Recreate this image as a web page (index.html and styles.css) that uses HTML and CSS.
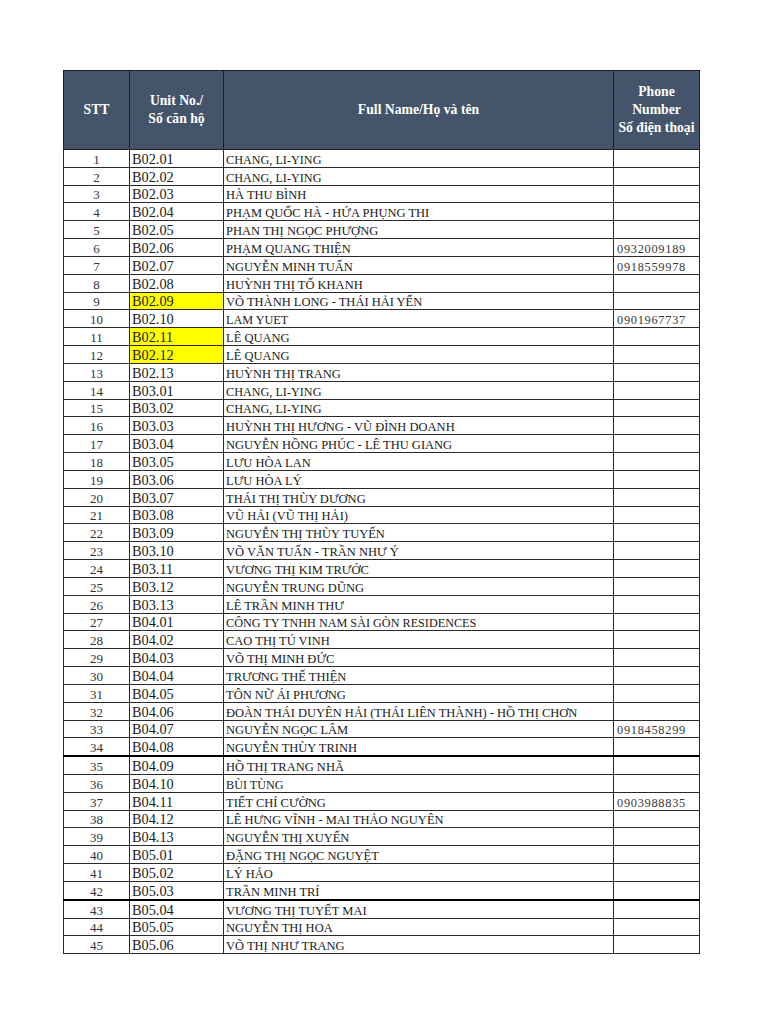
FILE: index.html
```html
<!DOCTYPE html>
<html lang="vi">
<head>
<meta charset="utf-8">
<title>Danh sách căn hộ</title>
<link rel="stylesheet" href="styles.css">
</head>
<body>
<table class="sheet">
  <colgroup>
    <col class="c-stt"><col class="c-unit"><col class="c-name"><col class="c-phone">
  </colgroup>
  <thead>
    <tr>
      <th>STT</th>
      <th>Unit No./<br>Số căn hộ</th>
      <th>Full Name/Họ và tên</th>
      <th>Phone<br>Number<br>Số điện thoại</th>
    </tr>
  </thead>
  <tbody>
    <tr><td class="stt">1</td><td class="unit">B02.01</td><td class="name sm">CHANG, LI-YING</td><td class="phone"></td></tr>
    <tr><td class="stt">2</td><td class="unit">B02.02</td><td class="name sm">CHANG, LI-YING</td><td class="phone"></td></tr>
    <tr><td class="stt">3</td><td class="unit">B02.03</td><td class="name">HÀ THU BÌNH</td><td class="phone"></td></tr>
    <tr><td class="stt">4</td><td class="unit">B02.04</td><td class="name">PHẠM QUỐC HÀ - HỨA PHỤNG THI</td><td class="phone"></td></tr>
    <tr><td class="stt">5</td><td class="unit">B02.05</td><td class="name">PHAN THỊ NGỌC PHƯỢNG</td><td class="phone"></td></tr>
    <tr><td class="stt">6</td><td class="unit">B02.06</td><td class="name">PHẠM QUANG THIỆN</td><td class="phone">0932009189</td></tr>
    <tr><td class="stt">7</td><td class="unit">B02.07</td><td class="name">NGUYỄN MINH TUẤN</td><td class="phone">0918559978</td></tr>
    <tr><td class="stt">8</td><td class="unit">B02.08</td><td class="name">HUỲNH THỊ TỐ KHANH</td><td class="phone"></td></tr>
    <tr><td class="stt">9</td><td class="unit hl">B02.09</td><td class="name">VÕ THÀNH LONG - THÁI HẢI YẾN</td><td class="phone"></td></tr>
    <tr><td class="stt">10</td><td class="unit">B02.10</td><td class="name sm">LAM YUET</td><td class="phone">0901967737</td></tr>
    <tr><td class="stt">11</td><td class="unit hl">B02.11</td><td class="name">LÊ QUANG</td><td class="phone"></td></tr>
    <tr><td class="stt">12</td><td class="unit hl">B02.12</td><td class="name">LÊ QUANG</td><td class="phone"></td></tr>
    <tr><td class="stt">13</td><td class="unit">B02.13</td><td class="name">HUỲNH THỊ TRANG</td><td class="phone"></td></tr>
    <tr><td class="stt">14</td><td class="unit">B03.01</td><td class="name sm">CHANG, LI-YING</td><td class="phone"></td></tr>
    <tr><td class="stt">15</td><td class="unit">B03.02</td><td class="name sm">CHANG, LI-YING</td><td class="phone"></td></tr>
    <tr><td class="stt">16</td><td class="unit">B03.03</td><td class="name">HUỲNH THỊ HƯƠNG - VŨ ĐÌNH DOANH</td><td class="phone"></td></tr>
    <tr><td class="stt">17</td><td class="unit">B03.04</td><td class="name">NGUYỄN HỒNG PHÚC - LÊ THU GIANG</td><td class="phone"></td></tr>
    <tr><td class="stt">18</td><td class="unit">B03.05</td><td class="name">LƯU HÒA LAN</td><td class="phone"></td></tr>
    <tr><td class="stt">19</td><td class="unit">B03.06</td><td class="name">LƯU HÒA LÝ</td><td class="phone"></td></tr>
    <tr><td class="stt">20</td><td class="unit">B03.07</td><td class="name">THÁI THỊ THÙY DƯƠNG</td><td class="phone"></td></tr>
    <tr><td class="stt">21</td><td class="unit">B03.08</td><td class="name">VŨ HẢI (VŨ THỊ HẢI)</td><td class="phone"></td></tr>
    <tr><td class="stt">22</td><td class="unit">B03.09</td><td class="name">NGUYỄN THỊ THÙY TUYẾN</td><td class="phone"></td></tr>
    <tr><td class="stt">23</td><td class="unit">B03.10</td><td class="name">VÕ VĂN TUẤN - TRẦN NHƯ Ý</td><td class="phone"></td></tr>
    <tr><td class="stt">24</td><td class="unit">B03.11</td><td class="name">VƯƠNG THỊ KIM TRƯỚC</td><td class="phone"></td></tr>
    <tr><td class="stt">25</td><td class="unit">B03.12</td><td class="name">NGUYỄN TRUNG DŨNG</td><td class="phone"></td></tr>
    <tr><td class="stt">26</td><td class="unit">B03.13</td><td class="name">LÊ TRẦN MINH THƯ</td><td class="phone"></td></tr>
    <tr><td class="stt">27</td><td class="unit">B04.01</td><td class="name sm">CÔNG TY TNHH NAM SÀI GÒN RESIDENCES</td><td class="phone"></td></tr>
    <tr><td class="stt">28</td><td class="unit">B04.02</td><td class="name">CAO THỊ TÚ VINH</td><td class="phone"></td></tr>
    <tr><td class="stt">29</td><td class="unit">B04.03</td><td class="name">VÕ THỊ MINH ĐỨC</td><td class="phone"></td></tr>
    <tr><td class="stt">30</td><td class="unit">B04.04</td><td class="name">TRƯƠNG THẾ THIỆN</td><td class="phone"></td></tr>
    <tr><td class="stt">31</td><td class="unit">B04.05</td><td class="name">TÔN NỮ ÁI PHƯƠNG</td><td class="phone"></td></tr>
    <tr><td class="stt">32</td><td class="unit">B04.06</td><td class="name">ĐOÀN THÁI DUYÊN HẢI (THÁI LIÊN THÀNH) - HỒ THỊ CHƠN</td><td class="phone"></td></tr>
    <tr><td class="stt">33</td><td class="unit">B04.07</td><td class="name">NGUYỄN NGỌC LÂM</td><td class="phone">0918458299</td></tr>
    <tr><td class="stt">34</td><td class="unit">B04.08</td><td class="name">NGUYỄN THÙY TRINH</td><td class="phone"></td></tr>
    <tr class="thick"><td class="stt">35</td><td class="unit">B04.09</td><td class="name">HỒ THỊ TRANG NHÃ</td><td class="phone"></td></tr>
    <tr><td class="stt">36</td><td class="unit">B04.10</td><td class="name sm">BÙI TÙNG</td><td class="phone"></td></tr>
    <tr><td class="stt">37</td><td class="unit">B04.11</td><td class="name">TIẾT CHÍ CƯỜNG</td><td class="phone">0903988835</td></tr>
    <tr><td class="stt">38</td><td class="unit">B04.12</td><td class="name">LÊ HƯNG VĨNH - MAI THẢO NGUYÊN</td><td class="phone"></td></tr>
    <tr><td class="stt">39</td><td class="unit">B04.13</td><td class="name">NGUYỄN THỊ XUYẾN</td><td class="phone"></td></tr>
    <tr><td class="stt">40</td><td class="unit">B05.01</td><td class="name">ĐẶNG THỊ NGỌC NGUYỆT</td><td class="phone"></td></tr>
    <tr><td class="stt">41</td><td class="unit">B05.02</td><td class="name">LÝ HẢO</td><td class="phone"></td></tr>
    <tr><td class="stt">42</td><td class="unit">B05.03</td><td class="name">TRẦN MINH TRÍ</td><td class="phone"></td></tr>
    <tr class="thick"><td class="stt">43</td><td class="unit">B05.04</td><td class="name">VƯƠNG THỊ TUYẾT MAI</td><td class="phone"></td></tr>
    <tr><td class="stt">44</td><td class="unit">B05.05</td><td class="name">NGUYỄN THỊ HOA</td><td class="phone"></td></tr>
    <tr><td class="stt">45</td><td class="unit">B05.06</td><td class="name">VÕ THỊ NHƯ TRANG</td><td class="phone"></td></tr>
  </tbody>
</table>
</body>
</html>
```
FILE: styles.css
```css
html, body {
  margin: 0;
  padding: 0;
  background: #ffffff;
}
body {
  padding: 70px 0 0 63px;
  font-family: "Liberation Serif", "Times New Roman", serif;
  color: #1a1a1a;
}
.sheet {
  border-collapse: collapse;
  table-layout: fixed;
  width: 636px;
}
.c-stt { width: 66px; }
.c-unit { width: 94px; }
.c-name { width: 390px; }
.c-phone { width: 86px; }

.sheet th {
  background: #44546a;
  color: #ffffff;
  font-weight: bold;
  font-size: 13.7px;
  line-height: 18px;
  height: 78px;
  padding: 0;
  border: 1px solid #1e1e1e;
  text-align: center;
  vertical-align: middle;
}
.sheet td {
  border: 1px solid #2a2a2a;
  height: 16.84px;
  padding: 0 2px;
  font-size: 12.5px;
  line-height: 14px;
  vertical-align: bottom;
  white-space: nowrap;
  overflow: hidden;
}
.sheet td.stt {
  text-align: center;
  font-size: 13px;
  color: #333;
}
.sheet td.unit {
  padding-left: 2px;
  font-size: 14.3px;
  line-height: 15px;
}
.sheet td.hl {
  background: #ffff00;
}
.sheet td.name {
  padding-left: 2px;
}
.sheet td.sm {
  font-size: 12.2px;
}
.sheet td.phone {
  text-align: left;
  font-size: 12.4px;
  letter-spacing: 0.7px;
  padding-left: 3px;
  color: #3a3a3a;
}
.sheet tr.thick td {
  border-top: 2px solid #000000;
}
```
